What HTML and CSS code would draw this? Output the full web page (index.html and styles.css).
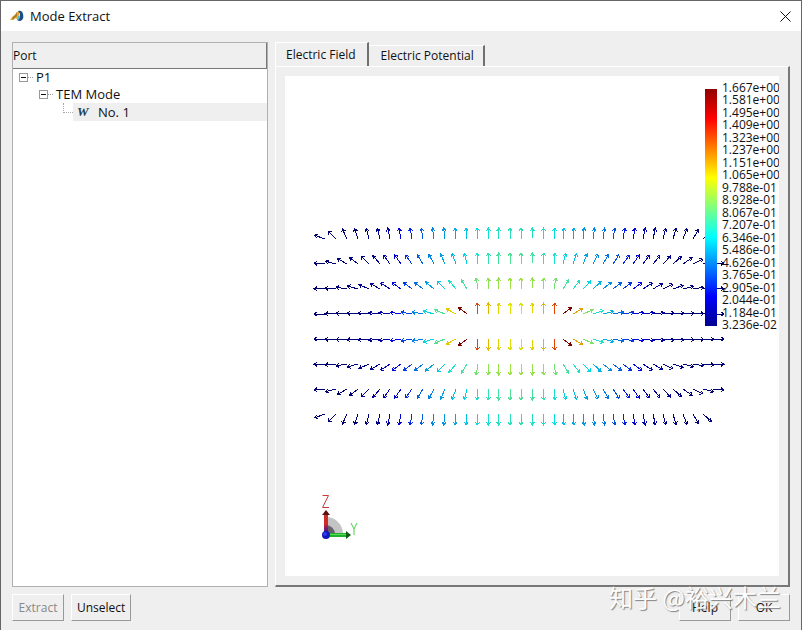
FILE: index.html
```html
<!DOCTYPE html>
<html lang="en">
<head>
<meta charset="utf-8">
<title>Mode Extract</title>
<link rel="stylesheet" href="styles.css">
</head>
<body>
<div class="window">
  <header class="titlebar">
    <svg class="logo" viewBox="0 0 14 12" aria-hidden="true">
      <path d="M0 10 L3 6 L5 5 L7 2 L9 1 L9 5 L7 9 L5 8 L3 10 Z" fill="#e8a832"/>
      <path d="M2 8 L5 5 L7 2 L7 6 L5 8 L3 10 Z" fill="#b07c28"/>
      <path d="M8 1 Q12 0 13 4 Q14 8 12 10 Q10 12 7 10 Q10 8 10 5 Q10 3 8 1 Z" fill="#1c4f86"/>
      <path d="M9 5 Q11 8 8 10 L7 10 Q7 7 9 5 Z" fill="#58b8c8"/>
    </svg>
    <h1 class="title">Mode Extract</h1>
    <button class="close" type="button" aria-label="Close">
      <svg viewBox="0 0 11 11"><path d="M0.5 0.5 L10.5 10.5 M10.5 0.5 L0.5 10.5" stroke="#111" fill="none"/></svg>
    </button>
  </header>

  <main class="content">
    <section class="tree">
      <h2 class="tree-head">Port</h2>
      <ul class="tree-list">
        <li class="node level1"><span class="toggle"></span><span class="dots"></span><span class="name">P1</span></li>
        <li class="node level2"><span class="toggle"></span><span class="dots"></span><span class="name">TEM Mode</span></li>
        <li class="node level3"><span class="elbow"></span><span class="selected"><i class="wave">W</i><span>No. 1</span></span></li>
      </ul>
    </section>

    <section class="view">
      <div class="tabs" role="tablist">
        <button class="tab active" type="button" role="tab" aria-selected="true">Electric Field</button>
        <button class="tab" type="button" role="tab" aria-selected="false">Electric Potential</button>
      </div>
      <div class="panel" role="tabpanel">
        <svg class="plot" id="plot" viewBox="285 76 494 500" role="img" aria-label="Electric field">
          <defs>
            <linearGradient id="jet" x1="0" y1="0" x2="0" y2="1">
              <stop offset="0" stop-color="#900000"/>
              <stop offset="0.125" stop-color="#ff0000"/>
              <stop offset="0.375" stop-color="#ffff00"/>
              <stop offset="0.5" stop-color="#7fff7f"/>
              <stop offset="0.625" stop-color="#00ffff"/>
              <stop offset="0.875" stop-color="#0000ff"/>
              <stop offset="1" stop-color="#000090"/>
            </linearGradient>
            <linearGradient id="zaxis" x1="0" y1="0" x2="0" y2="1">
              <stop offset="0" stop-color="#c03028"/>
              <stop offset="0.5" stop-color="#d82828"/>
              <stop offset="1" stop-color="#3010a0"/>
            </linearGradient>
          </defs>
          <g id="arrows" class="arrows"></g>
          <rect x="705" y="89" width="12" height="237" fill="url(#jet)"/>
          <g id="scale" class="scale"></g>
          <g>
            <path d="M326 517 A17 17 0 0 1 343 534 L326 534 Z" fill="#c4c4c4"/>
            <path d="M326 525 A9 9 0 0 1 335 534 L326 534 Z" fill="#66606e"/>
            <rect x="324" y="514" width="4" height="19" fill="url(#zaxis)"/>
            <path d="M326 510 L330 515 L322 515 Z" fill="#5c1010"/>
            <rect x="328" y="533" width="18" height="4" fill="#20b030"/>
            <rect x="328" y="534" width="18" height="1" fill="#50e050"/>
            <path d="M351 535 L346 531 L346 539 Z" fill="#0c5c14"/>
            <circle cx="326" cy="535" r="4" fill="#1018b8"/>
            <circle cx="325" cy="534" r="2" fill="#3038f0"/>
            <path d="M322.500 495.500 H328.500 L322.500 507.500 H329" fill="none" stroke="#c83c3c"/>
            <path d="M351 523 L354 529 L357 523 M354 529 V535" fill="none" stroke="#48d048"/>
          </g>
        </svg>
      </div>
    </section>
  </main>

  <footer class="actions">
    <button class="btn" type="button" disabled>Extract</button>
    <button class="btn" type="button">Unselect</button>
    <span class="spacer"></span>
    <button class="btn" type="button">Help</button>
    <button class="btn" type="button">OK</button>
    <span class="watermark">知乎 @裕兴木兰</span>
  </footer>
</div>
<script src="script.js"></script>
</body>
</html>
```
FILE: styles.css
```css
* { box-sizing: border-box; }

body {
  margin: 0;
  font: 12px/17px "Open Sans", "Noto Sans CJK SC", sans-serif;
  color: #111;
}

button { font: inherit; color: inherit; }

.window {
  display: flex;
  flex-direction: column;
  min-height: 100vh;
  background: #efefef;
  border: 1px solid #66666a;
  border-width: 1px 1px 0;
}

.titlebar {
  display: flex;
  align-items: center;
  height: 30px;
  padding: 0 10px 0 9px;
  background: #fff;
}
.logo { width: 14px; height: 12px; margin-right: 6px; }
.title { flex: 1; margin: 0; font-size: 13px; font-weight: 400; }
.close { padding: 0; border: 0; background: none; line-height: 0; }
.close svg { width: 11px; height: 11px; }

.content {
  flex: 1;
  display: grid;
  grid-template-columns: minmax(0, 256fr) minmax(0, 515fr);
  gap: 7px;
  padding: 11px 11px 7px;
}

.tree { background: #fff; border: 1px solid #b0b0b0; }
.tree-head {
  height: 26px;
  margin: 0;
  background: #efefef;
  border-right: 1px solid #777;
  border-bottom: 1px solid #777;
  font-size: 12px;
  font-weight: 400;
  line-height: 26px;
}
.tree-list { margin: 0; padding: 0; list-style: none; font-size: 13px; }
.node { display: flex; align-items: center; height: 17px; }
.level1 { padding-left: 6px; }
.level2 { padding-left: 26px; }
.level3 { padding-left: 50px; }
.toggle {
  width: 9px;
  height: 9px;
  border: 1px solid #999;
  background: linear-gradient(#111, #111) center / 5px 1px no-repeat;
}
.dots { width: 5px; margin-right: 3px; border-top: 1px dotted #999; }
.elbow {
  width: 10px;
  height: 10px;
  align-self: flex-start;
  border: 1px dotted #aaa;
  border-width: 0 0 1px 1px;
}
.selected {
  flex: 1;
  display: flex;
  gap: 9px;
  padding-left: 4px;
  background: #efefef;
  line-height: 18px;
}
.wave { width: 12px; font: italic bold 13px/17px "Liberation Serif", serif; color: #1d4254; }

.view { display: flex; flex-direction: column; }
.tabs { display: flex; align-items: flex-end; height: 24px; }
.tab {
  height: 21px;
  padding: 0 9px 0 12px;
  border: 1px solid #fff;
  border-right: 2px solid #707070;
  border-width: 1px 2px 0 0;
  background: #efefef;
  line-height: 18px;
}
.tab.active { height: 24px; padding: 0 11px 0 10px; border-left-width: 1px; line-height: 22px; }
.panel {
  flex: 1;
  display: flex;
  padding: 9px;
  border: 1px solid #fff;
  border-right: 2px solid #777;
  border-bottom: 2px solid #777;
}
.plot { width: 100%; background: #fff; }
.arrows path { fill: none; stroke-width: 1; shape-rendering: crispEdges; }
.scale { font: 12px "Open Sans", sans-serif; fill: #111; }

.actions {
  position: relative;
  display: flex;
  gap: 7px;
  padding: 0 11px 10px;
}
.spacer { flex: 1; }
.btn {
  min-width: 52px;
  height: 27px;
  padding: 0 5px;
  border: 1px solid #fff;
  border-right-color: #999;
  border-bottom-color: #999;
  background: #efefef;
}
.btn:disabled { color: #888; }
.watermark {
  position: absolute;
  right: 20px;
  bottom: 20px;
  font: 24px/28px "Noto Sans CJK SC", sans-serif;
  color: #fff;
  text-shadow: 1px 1px 1px #777;
  opacity: 0.9;
  pointer-events: none;
}
```
FILE: script.js
```js
const NS = "http://www.w3.org/2000/svg";

// Colour map position (0..1) to jet colour, slightly darkened for thin lines.
function jet(t) {
  const ch = c => Math.round(225 * Math.max(0, Math.min(1, 1.5 - Math.abs(4 * t - c))));
  return `rgb(${ch(3)},${ch(2)},${ch(1)})`;
}

// Tail heights, with elevation angle and strength at the 18 columns of one half.
const rows = [
  { y: 239, a: [20, 45, 65, 72, 76, 77, 78, 79, 80, 81, 82, 83, 84, 84, 86, 87, 88, 90],
    t: [0, 0, 0, .01, .02, .03, .06, .11, .17, .23, .27, .29, .31, .34, .37, .39, .41, .42] },
  { y: 264, a: [5, 15, 30, 38, 45, 50, 54, 55, 54, 58, 62, 66, 70, 76, 84, 86, 88, 90],
    t: [0, 0, 0, .01, .02, .03, .06, .11, .17, .23, .27, .30, .33, .36, .40, .43, .45, .46] },
  { y: 289, a: [2, 5, 10, 16, 24, 30, 33, 36, 38, 38, 40, 45, 50, 58, 80, 85, 88, 90],
    t: [0, 0, 0, .01, .02, .03, .07, .13, .19, .25, .30, .35, .40, .45, .50, .53, .54, .55] },
  { y: 314, a: [0, 2, 3, 5, 6, 7, 8, 9, 10, 11, 16, 22, 28, 38, 86, 87, 89, 90],
    t: [0, 0, 0, .01, .02, .03, .07, .13, .20, .27, .36, .46, .65, .99, .80, .67, .64, .62] }
];

const xs = [];
for (let i = 0; i < 38; i++) xs.push(i <= 21 ? Math.round(325 + i * 10.9) : 563 + (i - 22) * 10);

function sample(list, j) {
  const k = Math.floor(j), f = j - k;
  return list[k] + (list[Math.min(k + 1, list.length - 1)] - list[k]) * f;
}

function arrow(x, y, angle, color) {
  const r = angle * Math.PI / 180;
  const tx = x + 11 * Math.cos(r), ty = y - 11 * Math.sin(r);
  const barb = d => `${(tx - 3.5 * Math.cos(r + d)).toFixed(1)} ${(ty + 3.5 * Math.sin(r + d)).toFixed(1)}`;
  const p = document.createElementNS(NS, "path");
  p.setAttribute("d", `M${x} ${y} L${tx.toFixed(1)} ${ty.toFixed(1)} M${barb(0.6)} L${tx.toFixed(1)} ${ty.toFixed(1)} L${barb(-0.6)}`);
  p.setAttribute("stroke", color);
  document.getElementById("arrows").append(p);
}

rows.forEach((row, n) => {
  xs.forEach((x, i) => {
    if (n === 0 && i === 37) return;
    const right = i > 17;
    const j = i < 18 ? i : i < 22 ? 35 - i : 13 * (1 - (i - 22) / 15);
    const a = sample(row.a, j);
    const angle = right ? a : 180 - a;
    const color = jet(sample(row.t, j));
    arrow(x, row.y, angle, color);
    arrow(x, 653 - row.y, -angle, color);
  });
});

["1.667e+00", "1.581e+00", "1.495e+00", "1.409e+00", "1.323e+00", "1.237e+00", "1.151e+00",
 "1.065e+00", "9.788e-01", "8.928e-01", "8.067e-01", "7.207e-01", "6.346e-01", "5.486e-01",
 "4.626e-01", "3.765e-01", "2.905e-01", "2.044e-01", "1.184e-01", "3.236e-02"].forEach((label, i) => {
  const t = document.createElementNS(NS, "text");
  t.setAttribute("x", 722);
  t.setAttribute("y", Math.round(92 + i * 237 / 19));
  t.textContent = label;
  document.getElementById("scale").append(t);
});
```
